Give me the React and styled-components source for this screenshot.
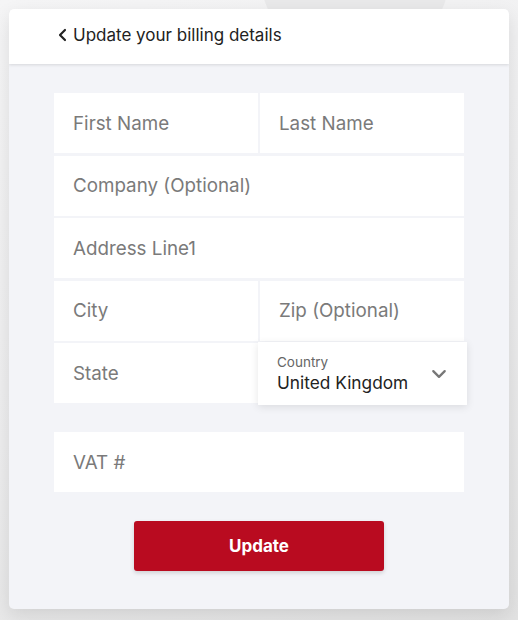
import React from 'react';
import styled, { createGlobalStyle } from 'styled-components';

const GlobalStyle = createGlobalStyle`
  html, body {
    margin: 0;
    padding: 0;
  }
  body {
    font-family: Inter, "Noto Sans", sans-serif;
    background:
      radial-gradient(circle at 355px -30px, #e9e9ea 0 95px, transparent 96px),
      linear-gradient(160deg, #f5f5f6 0%, #ededee 55%, #e2e2e2 100%);
    min-height: 620px;
  }
`;

const Page = styled.div`
  padding: 9px;
  box-sizing: border-box;
  min-height: 620px;
`;

const Card = styled.div`
  width: 500px;
  border-radius: 5px;
  overflow: hidden;
  background: #f3f4f8;
  box-shadow: 0 6px 18px rgba(0, 0, 0, 0.1);
`;

const Header = styled.div`
  height: 55px;
  box-sizing: border-box;
  padding: 0 0 3px 47px;
  background: #fff;
  display: flex;
  align-items: center;
  gap: 3px;
  color: #222;
  font-size: 17px;
  box-shadow: 0 1px 3px rgba(0, 0, 0, 0.12);
  position: relative;
`;

const Body = styled.div`
  padding: 29px 45px 38px;
  display: flex;
  flex-direction: column;
`;

const Grid = styled.div`
  display: grid;
  grid-template-columns: 1fr 1fr;
  row-gap: 2.5px;
  column-gap: 2px;
`;

const Field = styled.div`
  grid-column: ${p => (p.$wide ? '1 / -1' : 'auto')};
  height: 60px;
  background: #fff;
  display: flex;
  align-items: center;
  padding-left: 19px;
  font-size: 18.8px;
  color: #7a7a7a;
`;

const Select = styled.div`
  height: 63px;
  margin: -1px -3px -2px -2px;
  background: #fff;
  box-shadow: 0 2px 8px rgba(0, 0, 0, 0.1);
  display: flex;
  align-items: center;
  justify-content: space-between;
  padding: 0 20px 0 19px;
  position: relative;
`;

const SelectText = styled.div`
  display: flex;
  flex-direction: column;
  gap: 2px;
`;

const SelectLabel = styled.span`
  font-size: 13.5px;
  color: #666;
`;

const SelectValue = styled.span`
  font-size: 17.3px;
  color: #222;
`;

const Vat = styled(Field)`
  margin-top: 29px;
`;

const Button = styled.button`
  align-self: center;
  margin-top: 29px;
  width: 250px;
  height: 50px;
  border: none;
  border-radius: 3px;
  background: #b90b20;
  color: #fff;
  font-family: inherit;
  font-size: 17px;
  font-weight: 700;
  box-shadow: 0 2px 4px rgba(0, 0, 0, 0.15);
`;

const Chevron = ({ dir = 'left', color = '#222', size = 14 }) => (
  <svg width={size} height={size} viewBox="0 0 14 14" fill="none">
    {dir === 'left' ? (
      <path d="M9 2 L4 7 L9 12" stroke={color} strokeWidth="2.2" strokeLinecap="round" strokeLinejoin="round" />
    ) : (
      <path d="M2 4.5 L7 9.5 L12 4.5" stroke={color} strokeWidth="2" strokeLinecap="round" strokeLinejoin="round" />
    )}
  </svg>
);

export default function App() {
  return (
    <>
      <GlobalStyle />
      <Page>
        <Card>
          <Header>
            <Chevron dir="left" />
            Update your billing details
          </Header>
          <Body>
            <Grid>
              <Field>First Name</Field>
              <Field>Last Name</Field>
              <Field $wide>Company (Optional)</Field>
              <Field $wide>Address Line1</Field>
              <Field>City</Field>
              <Field>Zip (Optional)</Field>
              <Field>State</Field>
              <Select>
                <SelectText>
                  <SelectLabel>Country</SelectLabel>
                  <SelectValue>United Kingdom</SelectValue>
                </SelectText>
                <Chevron dir="down" color="#777" size={16} />
              </Select>
            </Grid>
            <Vat>VAT #</Vat>
            <Button>Update</Button>
          </Body>
        </Card>
      </Page>
    </>
  );
}
